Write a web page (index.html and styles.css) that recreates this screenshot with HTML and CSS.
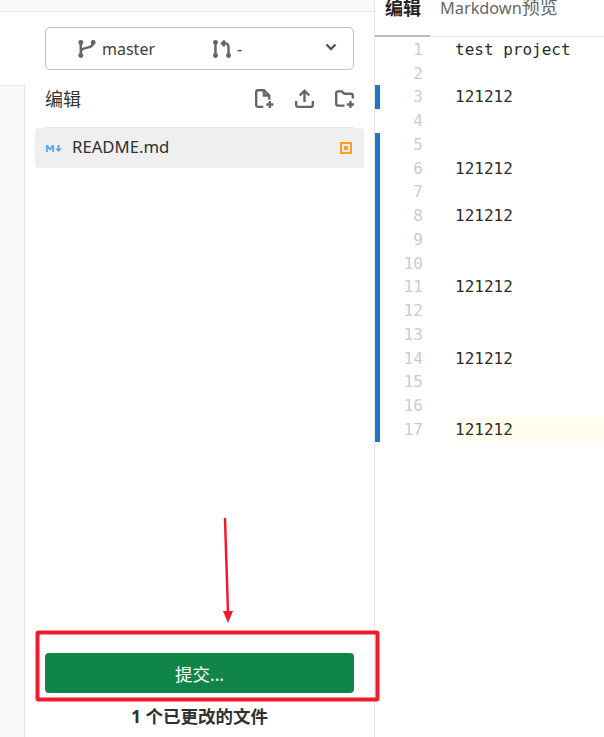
FILE: index.html
```html
<!DOCTYPE html>
<html lang="zh-CN">
<head>
<meta charset="utf-8">
<title>编辑</title>
<link rel="stylesheet" href="styles.css">
</head>
<body>
<div class="page">
  <div class="left">
    <div class="topstrip"></div>
    <div class="main">
      <div class="rail-wrap"><div class="rail"></div></div>
      <aside class="sidebar">
        <div class="branchbox">
          <div class="branch-item branch-item-a">
            <svg class="ico" viewBox="0 0 16 16" fill="none" stroke="#666" stroke-width="2.200"><circle cx="2.500" cy="2.200" r="1.700" fill="#666" stroke-width="1"/><circle cx="2.500" cy="13.800" r="1.700" fill="#666" stroke-width="1"/><circle cx="13.500" cy="2.200" r="1.700" fill="#666" stroke-width="1"/><path d="M2.500 3v10M2.500 11c0-2.500 1.500-3.500 5-4 4-.6 6-1.500 6-4.500"/></svg>
            <span>master</span>
          </div>
          <div class="branch-item branch-item-b">
            <svg class="ico" viewBox="0 0 16 16" fill="none" stroke="#666" stroke-width="2.200"><circle cx="2.200" cy="2.200" r="1.700" fill="#666" stroke-width="1"/><circle cx="2.200" cy="13.800" r="1.700" fill="#666" stroke-width="1"/><circle cx="13.800" cy="13.800" r="1.700" fill="#666" stroke-width="1"/><path d="M2.200 3v10M13.800 13V6.500C13.800 4 13 3 11 3H8M10.500 .5 8 3l2.500 2.500"/></svg>
            <span>-</span>
          </div>
          <svg class="chev" viewBox="0 0 12 8" fill="none" stroke="#555" stroke-width="2.400"><path d="M1.500 1.500 6 6l4.500-4.500"/></svg>
        </div>
        <div class="heading">
          <span class="heading-title">编辑</span>
          <div class="actions">
            <svg class="ico ico-action" viewBox="0 0 16 16" fill="none" stroke="#666" stroke-width="2"><path d="M7 15H2.500A1.500 1.500 0 0 1 1 13.500v-11A1.500 1.500 0 0 1 2.500 1h5l4.500 4.500V9M7.500 1v4.500H12"/><path d="M12.500 10v6M9.500 13h6" stroke-width="2"/></svg>
            <svg class="ico ico-action" viewBox="0 0 16 16" fill="none" stroke="#666" stroke-width="2"><path d="M1 10v3.500A1.500 1.500 0 0 0 2.500 15h11a1.500 1.500 0 0 0 1.500-1.500V10"/><path d="M8 11V2M4 5.500 8 1.500l4 4"/></svg>
            <svg class="ico ico-action" viewBox="0 0 16 16" fill="none" stroke="#666" stroke-width="2"><path d="M8 14H2.500A1.500 1.500 0 0 1 1 12.500v-9A1.500 1.500 0 0 1 2.500 2h3.300l2 2h5.700A1.500 1.500 0 0 1 15 5.500V8"/><path d="M13 10v6M10 13h6" stroke-width="2"/></svg>
          </div>
        </div>
        <div class="filerow">
          <svg class="md-ico" viewBox="0 0 16 8" fill="#5aa9f0"><path d="M0 8V1h1.800L4 4l2.200-3H8v7H6.200V4L4 6.800 1.800 4v4z"/><path d="M11.500 1h2v3.500H16L12.500 8 9 4.500h2.500z"/></svg>
          <span class="filename">README.md</span>
          <span class="status"><span class="status-dot"></span></span>
        </div>
        <div class="spacer"></div>
        <button class="commit">提交...</button>
        <div class="summary">1 个已更改的文件</div>
      </aside>
    </div>
  </div>
  <section class="editor">
    <div class="tabs">
      <span class="tab tab-active">编辑</span>
      <span class="tab tab-preview">Markdown<span class="tab-cjk">预览</span></span>
    </div>
    <div class="code">
      <div class="line"><span class="num">1</span><span class="txt">test project</span></div>
      <div class="line"><span class="num">2</span><span class="txt"></span></div>
      <div class="line changed"><span class="num">3</span><span class="txt">121212</span></div>
      <div class="line"><span class="num">4</span><span class="txt"></span></div>
      <div class="line changed"><span class="num">5</span><span class="txt"></span></div>
      <div class="line changed"><span class="num">6</span><span class="txt">121212</span></div>
      <div class="line changed"><span class="num">7</span><span class="txt"></span></div>
      <div class="line changed"><span class="num">8</span><span class="txt">121212</span></div>
      <div class="line changed"><span class="num">9</span><span class="txt"></span></div>
      <div class="line changed"><span class="num">10</span><span class="txt"></span></div>
      <div class="line changed"><span class="num">11</span><span class="txt">121212</span></div>
      <div class="line changed"><span class="num">12</span><span class="txt"></span></div>
      <div class="line changed"><span class="num">13</span><span class="txt"></span></div>
      <div class="line changed"><span class="num">14</span><span class="txt">121212</span></div>
      <div class="line changed"><span class="num">15</span><span class="txt"></span></div>
      <div class="line changed"><span class="num">16</span><span class="txt"></span></div>
      <div class="line changed"><span class="num">17</span><span class="txt current">121212</span></div>
    </div>
  </section>
  <svg class="annotation" viewBox="0 0 604 737" fill="none">
    <rect x="37.500" y="632.500" width="340" height="67" rx="1" stroke="#f01c2c" stroke-width="4"/>
    <path d="M225 519 228 613" stroke="#f01c2c" stroke-width="2.500" stroke-linecap="round"/>
    <path d="M223 611 233 611 228 623z" fill="#f01c2c"/>
  </svg>
</div>
</body>
</html>
```

FILE: styles.css
```css
* { box-sizing: border-box; }
html, body { margin: 0; height: 100%; background: #fff; }
body {
  font-family: "Noto Sans", "Noto Sans CJK SC", sans-serif;
  color: #303030;
  overflow: hidden;
}
.page {
  position: relative;
  display: grid;
  grid-template-columns: 375px 1fr;
  width: 604px;
  height: 737px;
  overflow: hidden;
}
.left {
  display: flex;
  flex-direction: column;
  border-right: 1px solid #e5e5e5;
  height: 737px;
}
.topstrip {
  height: 12px;
  flex: none;
  background: #fafafa;
  border-bottom: 1px solid #e5e5e5;
}
.main {
  flex: 1;
  display: grid;
  grid-template-columns: 25px 1fr;
  min-height: 0;
}
.rail-wrap {
  padding-top: 73px;
  display: flex;
}
.rail {
  flex: 1;
  background: #fafafa;
  border-top: 1px solid #e5e5e5;
  border-right: 1px solid #e5e5e5;
}
.sidebar {
  display: flex;
  flex-direction: column;
  padding: 15px 20px 0 10px;
  min-width: 0;
}
.branchbox {
  display: flex;
  align-items: center;
  margin-left: 10px;
  height: 43px;
  flex: none;
  border: 1px solid #bfbfbf;
  border-radius: 5px;
  padding: 0 16px 0 32px;
  font-size: 16px;
  color: #404040;
}
.branch-item { display: flex; align-items: center; gap: 6px; }
.branch-item-a { width: 135px; }
.branch-item-b { flex: 1; }
.ico { width: 18px; height: 18px; flex: none; }
.ico-action { width: 19px; height: 19px; }
.chev { width: 12px; height: 8px; margin-top: -3px; }
.heading {
  display: flex;
  align-items: center;
  justify-content: space-between;
  margin-left: 10px;
  height: 58px;
  padding-bottom: 1px;
  flex: none;
  border-bottom: 1px solid #e8e8e8;
}
.heading-title { font-size: 18px; color: #333; }
.actions { display: flex; gap: 21px; align-items: center; }
.filerow {
  display: flex;
  align-items: center;
  height: 40px;
  flex: none;
  background: #efefef;
  border-radius: 4px;
  padding: 0 12px 0 11px;
  margin-right: -10px;
}
.md-ico { width: 16px; height: 8px; flex: none; margin-right: 10px; }
.filename { flex: 1; font-size: 16.700px; line-height: 20px; padding-bottom: 3px; color: #303030; }
.status {
  display: flex;
  align-items: center;
  justify-content: center;
  width: 12px;
  height: 12px;
  border: 2px solid #fc9d1d;
  border-radius: 1px;
}
.status-dot { width: 4px; height: 4px; background: #fc9d1d; }
.spacer { flex: 1; }
.commit {
  display: block;
  margin-left: 10px;
  width: 309px;
  height: 40px;
  flex: none;
  background: #108548;
  border: 0;
  border-radius: 4px;
  color: #fff;
  font: 17.500px "Noto Sans", "Noto Sans CJK SC", sans-serif;
}
.summary {
  margin-left: 10px;
  height: 44px;
  flex: none;
  display: flex;
  align-items: center;
  justify-content: center;
  font-size: 17.500px;
  font-weight: 700;
  color: #303030;
}
.editor { min-width: 0; }
.tabs {
  display: flex;
  height: 37px;
  border-bottom: 1px solid #e8e8e8;
}
.tab {
  font-size: 16px;
  line-height: 17px;
  color: #666;
  padding: 0 10px;
  height: 37px;
  white-space: nowrap;
}
.tab-preview { font-size: 16.300px; line-height: 15px; }
.tab-cjk { font-size: 18px; }
.tab-active {
  font-size: 18px;
  font-weight: 700;
  color: #222;
  width: 55px;
  border-bottom: 2px solid #bbb;
}
.code {
  margin-top: .75px;
  font-family: "DejaVu Sans Mono", monospace;
  font-size: 16px;
}
.line {
  display: grid;
  grid-template-columns: 75px 1fr;
  height: 23.750px;
  line-height: 23.750px;
  border-left: 5px solid transparent;
}
.line.changed { border-left-color: #1f75cb; }
.num {
  text-align: right;
  padding-right: 32px;
  color: #ccc;
}
.txt { color: #2b2b2b; white-space: pre; }
.current { background: #fffeee; }
.annotation {
  position: absolute;
  left: 0;
  top: 0;
  width: 604px;
  height: 737px;
  pointer-events: none;
}
```
